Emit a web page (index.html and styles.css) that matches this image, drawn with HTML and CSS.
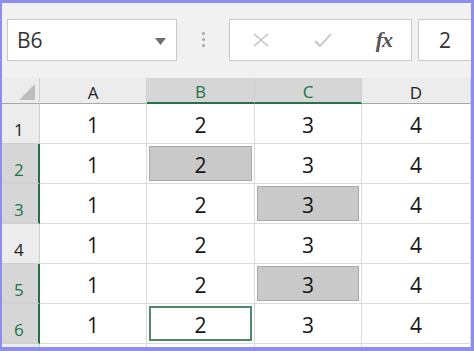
FILE: index.html
```html
<!DOCTYPE html>
<html lang="en">
<head>
  <meta charset="UTF-8">
  <title>Excel selection</title>
  <link rel="stylesheet" href="styles.css">
</head>
<body>
  <div class="frame">
    <div class="toolbar">
      <div class="namebox">
        <span>B6</span>
        <svg class="arrow" width="11" height="7" viewBox="0 0 11 7"><path d="M0 0h11L5.5 7z" fill="#6f6f6f"/></svg>
      </div>
      <div class="dots"><i></i><i></i><i></i></div>
      <div class="fbuttons">
        <svg width="18" height="14" viewBox="0 0 18 14"><path d="M2 1l14 12M16 1L2 13" stroke="#c4c4c4" stroke-width="1.6" fill="none"/></svg>
        <svg width="18" height="14" viewBox="0 0 18 14"><path d="M1 8l5 5L17 1" stroke="#c4c4c4" stroke-width="1.8" fill="none"/></svg>
        <span class="fx">fx</span>
      </div>
      <div class="finput">2</div>
    </div>

    <div class="sheet">
      <div class="hd corner">
        <svg width="17" height="16" viewBox="0 0 17 16"><path d="M0 16L16 0V16z" fill="#bdbdbd"/></svg>
      </div>
      <div class="hd col">A</div>
      <div class="hd col sel">B</div>
      <div class="hd col sel">C</div>
      <div class="hd col">D</div>

      <div class="hd row">1</div>
      <div class="cell">1</div><div class="cell">2</div><div class="cell">3</div><div class="cell">4</div>

      <div class="hd row sel">2</div>
      <div class="cell">1</div><div class="cell"><span class="mark">2</span></div><div class="cell">3</div><div class="cell">4</div>

      <div class="hd row sel">3</div>
      <div class="cell">1</div><div class="cell">2</div><div class="cell"><span class="mark">3</span></div><div class="cell">4</div>

      <div class="hd row">4</div>
      <div class="cell">1</div><div class="cell">2</div><div class="cell">3</div><div class="cell">4</div>

      <div class="hd row sel">5</div>
      <div class="cell">1</div><div class="cell">2</div><div class="cell"><span class="mark">3</span></div><div class="cell">4</div>

      <div class="hd row sel">6</div>
      <div class="cell">1</div><div class="cell"><span class="active">2</span></div><div class="cell">3</div><div class="cell">4</div>

      <div class="hd row"></div>
      <div class="cell"></div><div class="cell"></div><div class="cell"></div><div class="cell"></div>
    </div>
  </div>
</body>
</html>
```

FILE: styles.css
```css
body {
  margin: 0;
  font-family: "Open Sans", "Liberation Sans", sans-serif;
  color: #161616;
}
.frame {
  width: 469px;
  height: 344px;
  border-style: solid;
  border-color: #8e8ef2;
  border-width: 3px 3px 4px 2px;
  overflow: hidden;
  background: #fff;
}
.toolbar {
  height: 75px;
  background: #f1f1f1;
  display: flex;
  align-items: flex-start;
  padding: 16px 0 0 5px;
  box-sizing: border-box;
}
.namebox,
.fbuttons,
.finput {
  height: 42px;
  background: #fff;
  border: 1px solid #c9c9c9;
  box-sizing: border-box;
  display: flex;
  align-items: center;
}
.namebox {
  width: 170px;
  padding: 0 10px 0 9px;
  justify-content: space-between;
  font-size: 21px;
  color: #333;
}
.arrow {
  margin-top: 2px;
}
.dots {
  width: 52px;
  display: flex;
  flex-direction: column;
  align-items: center;
  gap: 3px;
  padding-top: 13px;
}
.dots i {
  width: 3px;
  height: 3px;
  background: #a4a4a4;
  border-radius: 50%;
}
.fbuttons {
  width: 183px;
  padding: 0 19px 0 22px;
  justify-content: space-between;
}
.fx {
  font-family: "Liberation Serif", serif;
  font-style: italic;
  font-weight: bold;
  font-size: 22px;
  color: #555;
  letter-spacing: -1px;
}
.finput {
  margin-left: 6px;
  flex: 1;
  border-right: none;
  padding-left: 20px;
  font-size: 21px;
  color: #333;
}
.sheet {
  display: grid;
  grid-template-columns: 38px 107px 108px 107px 109px;
  grid-template-rows: 26px repeat(7, 40px);
}
.hd {
  background: #ececec;
  border-right: 1px solid #cfcfcf;
  border-bottom: 1px solid #cfcfcf;
  box-sizing: border-box;
  color: #222;
}
.corner {
  border-bottom: 1px solid #a8a8a8;
  display: flex;
  align-items: flex-end;
  justify-content: flex-end;
  padding: 0 3px 3px 0;
}
.col {
  border-bottom: 1px solid #a8a8a8;
  display: flex;
  align-items: center;
  justify-content: center;
  font-size: 17px;
  padding-top: 3px;
}
.col.sel {
  background: #d6d6d6;
  color: #217346;
  border-bottom: 2px solid #217346;
}
.row {
  display: flex;
  align-items: flex-end;
  padding: 0 0 2px 12px;
  font-size: 17px;
}
.row.sel {
  background: #d6d6d6;
  color: #217346;
  border-right: 2px solid #217346;
}
.cell {
  border-right: 1px solid #dadada;
  border-bottom: 1px solid #dadada;
  box-sizing: border-box;
  display: flex;
  align-items: center;
  justify-content: center;
  font-size: 21px;
  padding-top: 3px;
  position: relative;
}
.mark,
.active {
  position: absolute;
  inset: 2px 2px 2px 2px;
  display: flex;
  align-items: center;
  justify-content: center;
  padding-top: 3px;
}
.mark {
  background: #c9c9c9;
  border: 1px solid #a9a9a9;
}
.active {
  border: 2px solid #4e8a6a;
}
```
